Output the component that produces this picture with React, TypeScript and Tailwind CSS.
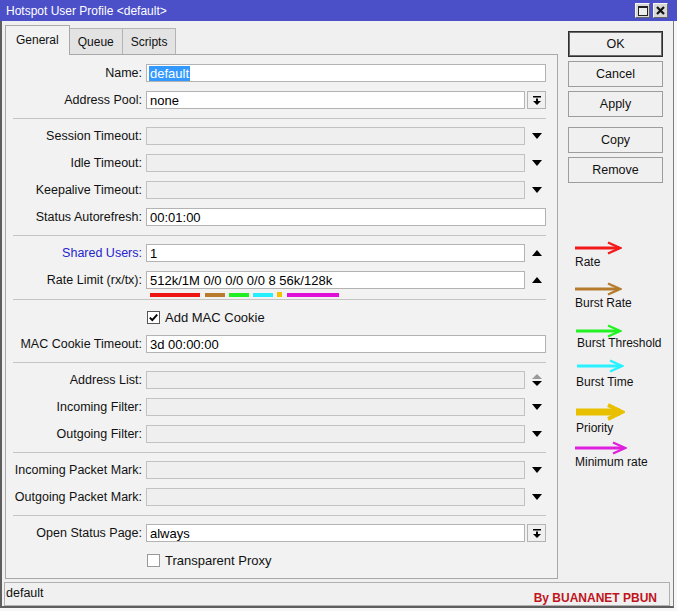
import React from "react";

function DownArrow() {
  return (
    <svg width="10" height="6" viewBox="0 0 10 6">
      <polygon points="0,0 10,0 5,6" fill="#000" />
    </svg>
  );
}

function UpArrow() {
  return (
    <svg width="10" height="6" viewBox="0 0 10 6">
      <polygon points="0,6 10,6 5,0" fill="#000" />
    </svg>
  );
}

function UpDownArrow() {
  return (
    <svg width="10" height="14" viewBox="0 0 10 14">
      <polygon points="0,6 10,6 5,1" fill="#9a9a9a" />
      <polygon points="0,8 10,8 5,13" fill="#000" />
    </svg>
  );
}

function DropIcon() {
  return (
    <svg width="8" height="9" viewBox="0 0 8 9">
      <rect x="0" y="0" width="8" height="1.5" fill="#000" />
      <rect x="3" y="2.5" width="2" height="2.5" fill="#000" />
      <polygon points="0,5 8,5 4,9" fill="#000" />
    </svg>
  );
}

function Row({
  label,
  blue,
  children,
}: {
  label?: string;
  blue?: boolean;
  children: React.ReactNode;
}) {
  return (
    <div className="mb-[9px] flex h-[18px] items-center">
      <div
        className={`w-[136px] shrink-0 text-right text-[12.5px] leading-none ${
          blue ? "text-[#2424d0]" : "text-[#111]"
        }`}
      >
        {label ? `${label}:` : ""}
      </div>
      <div className="ml-[4px] flex h-full items-center">{children}</div>
    </div>
  );
}

function Input({
  value,
  disabled,
  short,
  selected,
}: {
  value?: string;
  disabled?: boolean;
  short?: boolean;
  selected?: boolean;
}) {
  return (
    <div
      className={`flex h-[18px] items-center border pl-[2px] text-[13px] leading-none text-black ${
        short ? "w-[379px]" : "w-[400px]"
      } ${disabled ? "border-[#c2c2c2] bg-[#efefef]" : "border-[#b3b3b3] bg-white"}`}
    >
      {selected ? (
        <span className="bg-[#3399ff] px-[1px] py-[1px] text-white">{value}</span>
      ) : (
        <span className="pl-[1px]">{value}</span>
      )}
    </div>
  );
}

function Side({ children, button }: { children: React.ReactNode; button?: boolean }) {
  return (
    <div
      className={`ml-[2px] flex h-[18px] w-[19px] items-center justify-center ${
        button ? "border border-[#b3b3b3] bg-[#f0f0f0]" : ""
      }`}
    >
      {children}
    </div>
  );
}

function Separator() {
  return (
    <div className="h-[9px] pl-[7px]">
      <div className="h-px w-[533px] bg-[#c4c4c4]" />
    </div>
  );
}

function Checkbox({ checked, label }: { checked?: boolean; label: string }) {
  return (
    <div className="flex items-center">
      <div
        className={`ml-[1px] flex h-[13px] w-[13px] items-center justify-center border bg-white ${
          checked ? "border-[#555]" : "border-[#999]"
        }`}
      >
        {checked && (
          <svg width="11" height="11" viewBox="0 0 11 11">
            <path d="M1.8 5.6 L4.3 8.2 L9.2 2.6" fill="none" stroke="#000" strokeWidth="1.9" />
          </svg>
        )}
      </div>
      <span className="ml-[5px] text-[13px] leading-none text-[#111]">{label}</span>
    </div>
  );
}

function Button({ label, primary }: { label: string; primary?: boolean }) {
  return (
    <div
      className={`flex h-[26px] w-[95px] items-center justify-center border bg-[#f0f0f0] text-[12.5px] text-[#111] ${
        primary ? "border-[#2e2e2e] shadow-[inset_0_0_0_1px_#6a6a6a]" : "border-[#9d9d9d]"
      }`}
    >
      {label}
    </div>
  );
}

function Arrow({ color, width = 47 }: { color: string; width?: number }) {
  const tip = width - 2;
  return (
    <svg width={width} height="14" viewBox={`0 0 ${width} 14`}>
      <line x1="0" y1="7" x2={tip - 1} y2="7" stroke={color} strokeWidth="3" />
      <polyline
        points={`${tip - 12},1.5 ${tip},7 ${tip - 12},12.5`}
        fill="none"
        stroke={color}
        strokeWidth="2.4"
      />
    </svg>
  );
}

function ThickArrow({ color }: { color: string }) {
  return (
    <svg width="49" height="18" viewBox="0 0 49 18">
      <line x1="0" y1="9" x2="44" y2="9" stroke={color} strokeWidth="7" />
      <polyline points="32,2 46,9 32,16" fill="none" stroke={color} strokeWidth="4" />
    </svg>
  );
}

export default function App() {
  return (
    <div className="h-[611px] w-[677px] overflow-hidden bg-[#f7f7f7] font-['Liberation_Sans',Arial,sans-serif]">
      {/* title bar */}
      <div className="flex h-[21px] w-[677px] items-center bg-[#4b4fc8] pl-[6px] pr-[9px]">
        <span className="text-[12px] leading-none text-white">Hotspot User Profile &lt;default&gt;</span>
        <div className="ml-auto flex gap-[3px]">
          <div className="flex h-[15px] w-[15px] items-center justify-center border border-[#f4f4f4] border-r-[#666] border-b-[#666] bg-[#d8d8d8]">
            <div className="h-[10px] w-[10px] border border-t-2 border-[#222] bg-[#ececec]" />
          </div>
          <div className="flex h-[15px] w-[15px] items-center justify-center border border-[#f4f4f4] border-r-[#666] border-b-[#666] bg-[#d8d8d8]">
            <svg width="9" height="9" viewBox="0 0 9 9">
              <path d="M1 1 L8 8 M8 1 L1 8" stroke="#111" strokeWidth="2.2" />
            </svg>
          </div>
        </div>
      </div>

      {/* window body */}
      <div className="flex h-[587px] w-[674px] flex-col border-b-2 border-l-2 border-r border-[#5e5e5e] border-r-[#7c7c7c] bg-[#f0f0f0]">
        <div className="flex h-[558px]">
          {/* left column */}
          <div className="flex flex-col pl-[3px]">
            <div className="flex h-[33px] items-end">
              <div className="relative z-10 -mb-px flex h-[30px] items-center border-x border-t border-[#a8a8a8] bg-[#f2f2f2] px-[10px] pb-[2px] text-[12px] text-[#111]">
                General
              </div>
              <div className="flex h-[26px] items-center border-r border-t border-[#b4b4b4] bg-[#e3e3e3] px-[8px] text-[12px] text-[#111]">
                Queue
              </div>
              <div className="flex h-[26px] items-center border-r border-t border-[#b4b4b4] bg-[#e3e3e3] px-[8px] text-[12px] text-[#111]">
                Scripts
              </div>
            </div>
            <div className="h-[525px] w-[553px] border border-[#a8a8a8] bg-[#f2f2f2] pt-[9px]">
              <Row label="Name">
                <Input value="default" selected />
              </Row>
              <Row label="Address Pool">
                <Input value="none" short />
                <Side button>
                  <DropIcon />
                </Side>
              </Row>
              <Separator />
              <Row label="Session Timeout">
                <Input disabled short />
                <Side>
                  <DownArrow />
                </Side>
              </Row>
              <Row label="Idle Timeout">
                <Input disabled short />
                <Side>
                  <DownArrow />
                </Side>
              </Row>
              <Row label="Keepalive Timeout">
                <Input disabled short />
                <Side>
                  <DownArrow />
                </Side>
              </Row>
              <Row label="Status Autorefresh">
                <Input value="00:01:00" />
              </Row>
              <Separator />
              <Row label="Shared Users" blue>
                <Input value="1" short />
                <Side>
                  <UpArrow />
                </Side>
              </Row>
              <div className="flex h-[18px] items-center">
                <div className="w-[136px] shrink-0 text-right text-[12.5px] leading-none text-[#111]">
                  Rate Limit (rx/tx):
                </div>
                <div className="ml-[4px] flex h-full items-center">
                  <Input value="512k/1M 0/0 0/0 0/0 8 56k/128k" short />
                  <Side>
                    <UpArrow />
                  </Side>
                </div>
              </div>
              <div className="flex h-[10px] items-start pl-[144px] pt-[4px]">
                <div className="h-[4px] w-[50px] bg-[#ee1515]" />
                <div className="ml-[5px] h-[4px] w-[20px] bg-[#b87a2c]" />
                <div className="ml-[4px] h-[4px] w-[20px] bg-[#22ee22]" />
                <div className="ml-[4px] h-[4px] w-[20px] bg-[#25eeff]" />
                <div className="-mt-[1px] ml-[4px] h-[5px] w-[5px] bg-[#f2c200]" />
                <div className="ml-[5px] h-[4px] w-[52px] bg-[#e010d8]" />
              </div>
              <Separator />
              <Row>
                <Checkbox checked label="Add MAC Cookie" />
              </Row>
              <Row label="MAC Cookie Timeout">
                <Input value="3d 00:00:00" />
              </Row>
              <Separator />
              <Row label="Address List">
                <Input disabled short />
                <Side>
                  <UpDownArrow />
                </Side>
              </Row>
              <Row label="Incoming Filter">
                <Input disabled short />
                <Side>
                  <DownArrow />
                </Side>
              </Row>
              <Row label="Outgoing Filter">
                <Input disabled short />
                <Side>
                  <DownArrow />
                </Side>
              </Row>
              <Separator />
              <Row label="Incoming Packet Mark">
                <Input disabled short />
                <Side>
                  <DownArrow />
                </Side>
              </Row>
              <Row label="Outgoing Packet Mark">
                <Input disabled short />
                <Side>
                  <DownArrow />
                </Side>
              </Row>
              <Separator />
              <Row label="Open Status Page">
                <Input value="always" short />
                <Side button>
                  <DropIcon />
                </Side>
              </Row>
              <Row>
                <Checkbox label="Transparent Proxy" />
              </Row>
            </div>
          </div>

          {/* right column */}
          <div className="ml-[10px] flex w-[95px] flex-col pt-[10px]">
            <Button label="OK" primary />
            <div className="mt-[4px]">
              <Button label="Cancel" />
            </div>
            <div className="mt-[4px]">
              <Button label="Apply" />
            </div>
            <div className="mt-[10px]">
              <Button label="Copy" />
            </div>
            <div className="mt-[4px]">
              <Button label="Remove" />
            </div>

            <div className="flex w-[110px] flex-col pl-[7px] text-[12px] leading-[14px] text-[#111]">
              <div className="mt-[58px] h-[14px]">
                <Arrow color="#f21a1a" />
              </div>
              <div>Rate</div>
              <div className="mt-[13px] h-[14px]">
                <Arrow color="#b57c2e" />
              </div>
              <div>Burst Rate</div>
              <div className="mt-[14px] h-[14px] pl-[1px]">
                <Arrow color="#22f222" width={46} />
              </div>
              <div className="-mt-[2px] pl-[2px]">Burst Threshold</div>
              <div className="mt-[9px] h-[14px] pl-[2px]">
                <Arrow color="#28f2ff" />
              </div>
              <div className="mt-[2px] pl-[1px]">Burst Time</div>
              <div className="mt-[14px] h-[18px] pl-[1px]">
                <ThickArrow color="#e8c000" />
              </div>
              <div className="pl-[1px]">Priority</div>
              <div className="mt-[6px] h-[14px]">
                <Arrow color="#e020dc" width={52} />
              </div>
              <div>Minimum rate</div>
            </div>
          </div>
        </div>

        {/* status bar */}
        <div className="ml-[2px] mt-[3px] flex h-[24px] w-[666px] items-start justify-between border border-[#b0b0b0] bg-[#f0f0f0]">
          <span className="pl-[1px] pt-[4px] text-[12.5px] leading-none text-[#111]">default</span>
          <span className="pr-[12px] pt-[9px] text-[12px] font-bold leading-none text-[#c0141c]">
            By BUANANET PBUN
          </span>
        </div>
      </div>
    </div>
  );
}
